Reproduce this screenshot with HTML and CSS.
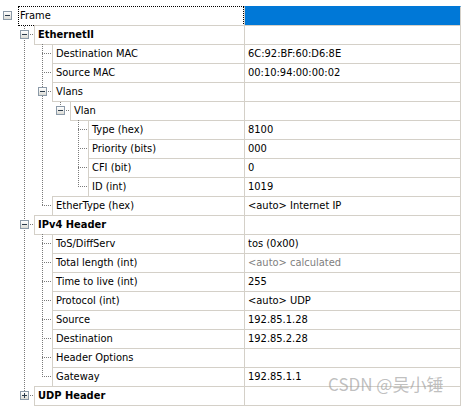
FILE: index.html
```html
<!DOCTYPE html>
<html lang="en">
<head>
    <meta charset="UTF-8">
    <title>Packet Editor</title>
    <link rel="stylesheet" href="styles.css">
</head>
<body>
    <div id="grid" class="grid"></div>
    <div class="watermark">CSDN @吴小锤</div>

    <script>
        // level, label, value, state ('open' | 'closed' | ''), extra classes
        const rows = [
            [0, 'Frame', '', 'open', 'focus'],
            [1, 'EthernetII', '', 'open', 'bold'],
            [2, 'Destination MAC', '6C:92:BF:60:D6:8E'],
            [2, 'Source MAC', '00:10:94:00:00:02'],
            [2, 'Vlans', '', 'open'],
            [3, 'Vlan', '', 'open'],
            [4, 'Type (hex)', '8100'],
            [4, 'Priority (bits)', '000'],
            [4, 'CFI (bit)', '0'],
            [4, 'ID (int)', '1019'],
            [2, 'EtherType (hex)', '<auto> Internet IP'],
            [1, 'IPv4 Header', '', 'open', 'bold'],
            [2, 'ToS/DiffServ', 'tos (0x00)'],
            [2, 'Total length (int)', '<auto> calculated', '', 'muted'],
            [2, 'Time to live (int)', '255'],
            [2, 'Protocol (int)', '<auto> UDP'],
            [2, 'Source', '192.85.1.28'],
            [2, 'Destination', '192.85.2.28'],
            [2, 'Header Options', ''],
            [2, 'Gateway', '192.85.1.1'],
            [1, 'UDP Header', '', 'closed', 'bold']
        ];

        const cellX = lvl => lvl === 0 ? 18 : 34 + (lvl - 1) * 18;
        const lineX = lvl => lvl === 0 ? 7 : cellX(lvl) - 10;
        const esc = s => s.replace(/&/g, '&amp;').replace(/</g, '&lt;').replace(/>/g, '&gt;');

        // does another sibling at this level follow row i?
        function hasNext(i, lvl) {
            for (let j = i + 1; j < rows.length; j++) {
                if (rows[j][0] < lvl) return false;
                if (rows[j][0] === lvl) return true;
            }
            return false;
        }

        function ancestorContinues(i, k) {
            for (let j = i - 1; j >= 0; j--) {
                if (rows[j][0] === k) return hasNext(j, k);
            }
            return false;
        }

        document.getElementById('grid').innerHTML = rows.map((r, i) => {
            const [lvl, label, value, state = '', extra = ''] = r;
            let guides = '';
            for (let k = 1; k < lvl; k++) {
                if (ancestorContinues(i, k)) {
                    guides += `<span class="vline" style="left:${lineX(k)}px"></span>`;
                }
            }
            if (lvl > 0) {
                const h = hasNext(i, lvl) ? 'full' : 'half';
                guides += `<span class="vline ${h}" style="left:${lineX(lvl)}px"></span>`;
                guides += `<span class="hline" style="left:${lineX(lvl)}px;width:${cellX(lvl) - lineX(lvl)}px"></span>`;
            }
            if (state) {
                guides += `<span class="box ${state}" style="left:${lineX(lvl) - 4}px"></span>`;
            }
            return `
                <div class="row ${extra}">
                    <div class="tree" style="width:${cellX(lvl)}px">${guides}</div>
                    <div class="name">${esc(label)}</div>
                    <div class="value">${esc(value)}</div>
                </div>`;
        }).join('');
    </script>
</body>
</html>
```

FILE: styles.css
```css
* {
    box-sizing: border-box;
}
body {
    margin: 0;
    padding-top: 6px;
    background: #fff;
    color: #000;
    font-family: "DejaVu Sans Condensed", Tahoma, "Liberation Sans", sans-serif;
    font-size: 11px;
    position: relative;
    height: 406px;
    overflow: hidden;
}
.grid {
    width: 461px;
}
.row {
    display: flex;
    height: 20px;
    margin-bottom: -1px;
}
.tree {
    flex: none;
    position: relative;
    height: 20px;
}
.name {
    flex: 1;
    min-width: 0;
    border: 1px solid #d4d0c8;
    border-right: none;
    padding-left: 3px;
    line-height: 18px;
    white-space: nowrap;
    overflow: hidden;
}
.value {
    flex: none;
    width: 217px;
    border: 1px solid #d4d0c8;
    padding-left: 3px;
    line-height: 18px;
    white-space: nowrap;
    overflow: hidden;
}
.bold .name {
    font-weight: bold;
}
.muted .value {
    color: #808080;
}

/* selected root row */
.focus .name {
    border: 1px dotted #000;
    padding-left: 1px;
}
.focus .value {
    background: #0078d7;
    border-top-color: #0078d7;
}

/* tree guides */
.vline {
    position: absolute;
    top: 0;
    width: 1px;
    height: 20px;
    background: repeating-linear-gradient(to bottom, #7a7a7a 0 1px, transparent 1px 2px) fixed;
}
.vline.half {
    height: 10px;
}
.hline {
    position: absolute;
    top: 9px;
    height: 1px;
    background: repeating-linear-gradient(to right, #7a7a7a 0 1px, transparent 1px 2px) fixed;
}
.box {
    position: absolute;
    top: 5px;
    width: 9px;
    height: 9px;
    border: 1px solid #8c9aa8;
    background: linear-gradient(#fff, #dcdcd6);
    z-index: 1;
}
.box::before {
    content: '';
    position: absolute;
    left: 1px;
    top: 3px;
    width: 5px;
    height: 1px;
    background: #2a3a4a;
}
.box.closed::after {
    content: '';
    position: absolute;
    left: 3px;
    top: 1px;
    width: 1px;
    height: 5px;
    background: #2a3a4a;
}

.watermark {
    position: absolute;
    left: 328px;
    top: 371px;
    font-family: "Noto Sans CJK SC", sans-serif;
    font-size: 17px;
    color: rgba(150, 150, 150, 0.6);
    white-space: nowrap;
}
```
